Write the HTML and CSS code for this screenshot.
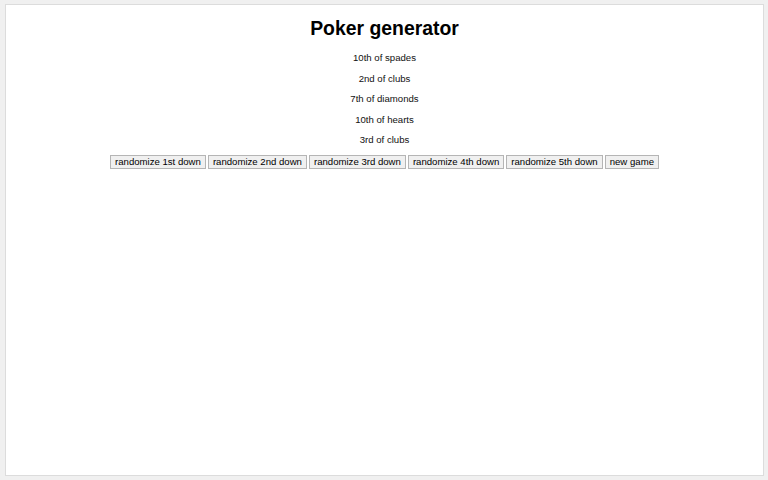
FILE: index.html
```html
<!DOCTYPE html>
<html>
<head>
<meta charset="utf-8">
<link rel="stylesheet" href="styles.css">
</head>
<body>
<div class="panel">
  <h1 class="title">Poker generator</h1>
  <div class="cards">
    <div class="card">10th of spades</div>
    <div class="card">2nd of clubs</div>
    <div class="card">7th of diamonds</div>
    <div class="card">10th of hearts</div>
    <div class="card">3rd of clubs</div>
  </div>
  <div class="buttons">
    <button class="btn">randomize 1st down</button>
    <button class="btn">randomize 2nd down</button>
    <button class="btn">randomize 3rd down</button>
    <button class="btn">randomize 4th down</button>
    <button class="btn">randomize 5th down</button>
    <button class="btn">new game</button>
  </div>
</div>
</body>
</html>
```

FILE: styles.css
```css
html, body {
  margin: 0;
  padding: 0;
  background: #f0f0f0;
  font-family: "Liberation Sans", Arial, sans-serif;
}
body {
  padding: 4px 4px 4px 5px;
  height: 480px;
  box-sizing: border-box;
}
.panel {
  background: #fff;
  border: 1px solid #dcdcdc;
  height: 472px;
  box-sizing: border-box;
  text-align: center;
}
.title {
  margin: 12px 0 0;
  font-size: 19.4px;
  font-weight: bold;
  line-height: 23px;
  color: #000;
}
.cards {
  margin-top: 8px;
}
.card {
  font-size: 9.6px;
  line-height: 20.5px;
  color: #111;
}
.buttons {
  margin-top: 4px;
  display: flex;
  justify-content: center;
  gap: 2px;
}
.btn {
  font-family: "Liberation Sans", Arial, sans-serif;
  font-size: 9.6px;
  line-height: 12px;
  padding: 0 4px;
  background: #f0f0f0;
  border: 1px solid #b5b5b5;
  border-radius: 0;
  color: #000;
}
```
